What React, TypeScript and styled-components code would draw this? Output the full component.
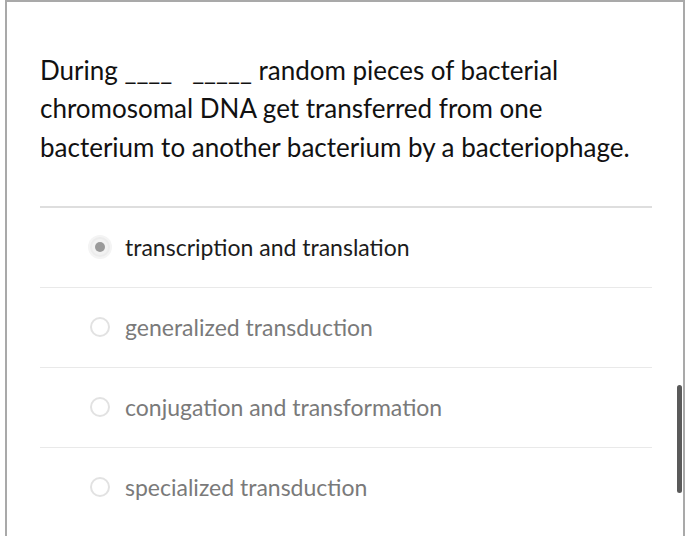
import React from "react";
import styled, { createGlobalStyle } from "styled-components";

const GlobalStyle = createGlobalStyle`
  html, body {
    margin: 0;
    padding: 0;
    background: #fff;
    overflow: hidden;
  }
  body {
    font-family: Lato, "Open Sans", sans-serif;
  }
`;

const Page = styled.div`
  position: relative;
  width: 687px;
  height: 536px;
  overflow: hidden;
`;

const Card = styled.div`
  margin-left: 5px;
  width: 680px;
  height: 600px;
  box-sizing: border-box;
  border: 2px solid #a9a9a9;
  border-bottom: none;
  padding: 49px 31px 0 33px;
`;

const Question = styled.p`
  margin: 0;
  font-size: 26px;
  line-height: 38.3px;
  color: #111;
  padding-bottom: 40px;
  border-bottom: 2px solid #dedede;
  white-space: nowrap;
`;

const OptionList = styled.div`
  display: flex;
  flex-direction: column;
`;

const OptionRow = styled.div<{ $last?: boolean }>`
  display: flex;
  align-items: center;
  gap: 15px;
  height: 79px;
  padding-left: 50px;
  border-bottom: ${(p) => (p.$last ? "none" : "1px solid #e9e9e9")};
`;

const Radio = styled.span<{ $checked?: boolean }>`
  width: 20px;
  height: 20px;
  box-sizing: border-box;
  border-radius: 50%;
  flex-shrink: 0;
  display: flex;
  align-items: center;
  justify-content: center;
  border: 2px solid ${(p) => (p.$checked ? "#ececec" : "#e2e2e2")};
  background: ${(p) => (p.$checked ? "#f2f2f2" : "#fff")};
  box-shadow: ${(p) => (p.$checked ? "0 0 0 2px #f4f4f4" : "none")};

  &::after {
    content: "";
    display: ${(p) => (p.$checked ? "block" : "none")};
    width: 10px;
    height: 10px;
    border-radius: 50%;
    background: #9a9a9a;
  }
`;

const OptionLabel = styled.span<{ $checked?: boolean }>`
  font-size: 23px;
  color: ${(p) => (p.$checked ? "#1c1c1c" : "#7a7a7a")};
`;

const Scrollbar = styled.div`
  position: absolute;
  left: 677px;
  top: 385px;
  width: 5px;
  height: 108px;
  border-radius: 3px;
  background: #5a5a5a;
`;

const options = [
  "transcription and translation",
  "generalized transduction",
  "conjugation and transformation",
  "specialized transduction",
];

export default function App() {
  return (
    <>
      <GlobalStyle />
      <Page>
        <Card>
          <Question>
            During ____&nbsp;&nbsp; _____ random pieces of bacterial
            <br />
            chromosomal DNA get transferred from one
            <br />
            bacterium to another bacterium by a bacteriophage.
          </Question>
          <OptionList>
            {options.map((o, i) => (
              <OptionRow key={o} $last={i === options.length - 1}>
                <Radio $checked={i === 0} />
                <OptionLabel $checked={i === 0}>{o}</OptionLabel>
              </OptionRow>
            ))}
          </OptionList>
        </Card>
        <Scrollbar />
      </Page>
    </>
  );
}
